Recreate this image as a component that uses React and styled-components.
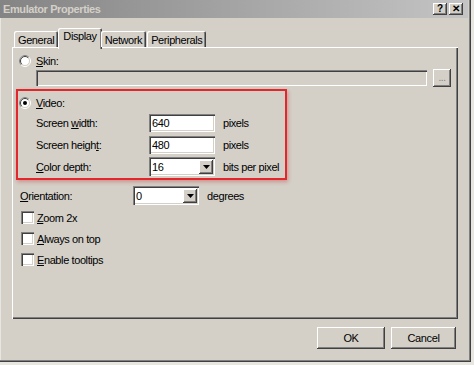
import React from "react";
import styled, { createGlobalStyle } from "styled-components";

const Global = createGlobalStyle`
  html, body { margin: 0; padding: 0; background: #e8e6e1; }
  body { font-family: "Liberation Sans", Arial, sans-serif; font-size: 11px; color: #000; }
  * { box-sizing: border-box; }
`;

const Window = styled.div`
  width: 471px;
  height: 362px;
  background: #d4d0c8;
  display: flex;
  flex-direction: column;
  padding-right: 3px;
  box-shadow: inset -1px -1px #404040, inset -2px -2px #808080, inset 1px 0 #e8e6e1;
  letter-spacing: -0.4px;
`;

const TitleBar = styled.div`
  height: 18px;
  flex: none;
  display: flex;
  align-items: center;
  padding: 0 3px 0 3px;
  background: linear-gradient(to right, #848484, #c4c4c4);
  color: #d4d0c8;
  font-weight: bold;
  font-size: 11px;
`;

const TitleText = styled.div`
  flex: 1;
`;

const TitleButtons = styled.div`
  display: flex;
  gap: 2px;
  margin-right: 2px;
`;

const CaptionButton = styled.div`
  width: 14px;
  height: 12px;
  background: #d4d0c8;
  box-shadow: inset -1px -1px #404040, inset 1px 1px #fff, inset -2px -2px #808080;
  display: flex;
  align-items: center;
  justify-content: center;
  color: #000;
  font-size: 10px;
  font-weight: bold;
  letter-spacing: 0;
  line-height: 1;
`;

const Body = styled.div`
  flex: 1;
  display: flex;
  flex-direction: column;
  padding: 10px 12px 0 12px;
`;

const TabStrip = styled.div`
  display: flex;
  align-items: flex-end;
  height: 19px;
  padding-left: 2px;
  position: relative;
  z-index: 1;
`;

const Tab = styled.div`
  height: ${(p) => (p.$active ? "21px" : "16px")};
  margin: ${(p) => (p.$active ? "0 -1px -2px -1px" : "0 1px 0 0")};
  padding: ${(p) => (p.$active ? "2px 5px 0 5px" : "1px 4px 0 4px")};
  background: #d4d0c8;
  border-top-left-radius: 2px;
  border-top-right-radius: 2px;
  box-shadow: inset 1px 1px #fff, inset -1px 0 #404040, inset -2px 0 #808080;
  display: flex;
  align-items: ${(p) => (p.$active ? "flex-start" : "center")};
  white-space: nowrap;
`;

const Panel = styled.div`
  width: 446px;
  height: 272px;
  background: #d4d0c8;
  box-shadow: inset 1px 1px #fff, inset -1px -1px #404040, inset -2px -2px #808080;
  display: flex;
  flex-direction: column;
  padding: 7px 0 0 4px;
`;

const Row = styled.div`
  display: flex;
  align-items: center;
  height: ${(p) => p.$h || 14}px;
  margin-top: ${(p) => p.$mt || 0}px;
  padding-left: ${(p) => p.$pl || 0}px;
`;

const Label = styled.span`
  width: ${(p) => (p.$w ? `${p.$w}px` : "auto")};
  flex: none;
  white-space: nowrap;
`;

const Unit = styled.span`
  margin-left: 8px;
  white-space: nowrap;
`;

const RadioLabel = styled.span`
  margin-left: 5px;
`;

const TextBox = styled.div`
  width: ${(p) => p.$w}px;
  height: ${(p) => p.$h || 18}px;
  background: ${(p) => (p.$disabled ? "#d4d0c8" : "#fff")};
  box-shadow: inset 1px 1px #808080, inset 2px 2px #404040, inset -1px -1px #fff, inset -2px -2px #d4d0c8;
  padding: 0 3px;
  display: flex;
  align-items: center;
  flex: none;
`;

const Combo = styled(TextBox)`
  padding: 2px 2px 2px 3px;
  justify-content: space-between;
`;

const ComboArrow = styled.div`
  width: 14px;
  height: 14px;
  background: #d4d0c8;
  box-shadow: inset -1px -1px #404040, inset 1px 1px #fff, inset -2px -2px #808080;
  display: flex;
  align-items: center;
  justify-content: center;
`;

const SmallButton = styled.div`
  width: 18px;
  height: 18px;
  margin-left: 6px;
  background: #d4d0c8;
  box-shadow: inset -1px -1px #404040, inset 1px 1px #fff, inset -2px -2px #808080;
  color: #808080;
  display: flex;
  align-items: center;
  justify-content: center;
  font-size: 10px;
  padding-bottom: 2px;
`;

const Highlight = styled.div`
  width: 271px;
  height: 91px;
  margin: 2px 0 0 0;
  border: 2px solid #e3262b;
  box-shadow: 1px 2px 4px rgba(190, 70, 70, 0.45);
  padding: 5px 0 0 1px;
  display: flex;
  flex-direction: column;
`;

const Fields = styled.div`
  display: flex;
  flex-direction: column;
  gap: 3px;
  margin-top: 3px;
`;

const CheckList = styled.div`
  display: flex;
  flex-direction: column;
  gap: 8px;
  margin-top: 6px;
  padding-left: 5px;
`;

const Footer = styled.div`
  display: flex;
  justify-content: flex-end;
  gap: 6px;
  margin-top: 8px;
`;

const PushButton = styled.div`
  width: ${(p) => p.$w}px;
  height: 22px;
  background: #d4d0c8;
  box-shadow: inset -1px -1px #404040, inset 1px 1px #fff, inset -2px -2px #808080;
  display: flex;
  align-items: center;
  justify-content: center;
`;

const CheckBoxBox = styled.div`
  width: 13px;
  height: 13px;
  background: #fff;
  box-shadow: inset 1px 1px #808080, inset 2px 2px #404040, inset -1px -1px #fff, inset -2px -2px #d4d0c8;
  flex: none;
`;

const CheckLabel = styled.span`
  margin-left: 3px;
`;

function Radio({ checked }) {
  return (
    <svg width="12" height="12" viewBox="0 0 12 12" style={{ flex: "none" }}>
      <circle cx="6" cy="6" r="5.5" fill="none" stroke="#fff" />
      <path d="M9.9 2.1 A5.5 5.5 0 0 0 2.1 9.9" fill="none" stroke="#808080" />
      <circle cx="6" cy="6" r="4.5" fill="#fff" />
      <path d="M9.2 2.8 A4.5 4.5 0 0 0 2.8 9.2" fill="none" stroke="#404040" />
      <path d="M9.2 2.8 A4.5 4.5 0 0 1 2.8 9.2" fill="none" stroke="#d4d0c8" />
      {checked && <circle cx="6" cy="6" r="2" fill="#000" />}
    </svg>
  );
}

function Arrow() {
  return (
    <svg width="7" height="4" viewBox="0 0 7 4">
      <path d="M0 0h7L3.5 4z" fill="#000" />
    </svg>
  );
}

export default function App() {
  return (
    <>
      <Global />
      <Window>
        <TitleBar>
          <TitleText>Emulator Properties</TitleText>
          <TitleButtons>
            <CaptionButton>?</CaptionButton>
            <CaptionButton>✕</CaptionButton>
          </TitleButtons>
        </TitleBar>
        <Body>
          <TabStrip>
            <Tab>General</Tab>
            <Tab $active>Display</Tab>
            <Tab>Network</Tab>
            <Tab>Peripherals</Tab>
          </TabStrip>
          <Panel>
            <Row $pl={3}>
              <Radio />
              <RadioLabel>
                <u>S</u>kin:
              </RadioLabel>
            </Row>
            <Row $h={18} $mt={1} $pl={20}>
              <TextBox $w={391} $h={16} $disabled />
              <SmallButton>...</SmallButton>
            </Row>
            <Highlight>
              <Row>
                <Radio checked />
                <RadioLabel>
                  <u>V</u>ideo:
                </RadioLabel>
              </Row>
              <Fields>
                <Row $h={19} $pl={17}>
                  <Label $w={113}>
                    Screen <u>w</u>idth:
                  </Label>
                  <TextBox $w={66}>640</TextBox>
                  <Unit>pixels</Unit>
                </Row>
                <Row $h={19} $pl={17}>
                  <Label $w={113}>
                    Screen heigh<u>t</u>:
                  </Label>
                  <TextBox $w={66}>480</TextBox>
                  <Unit>pixels</Unit>
                </Row>
                <Row $h={19} $pl={17}>
                  <Label $w={113}>
                    <u>C</u>olor depth:
                  </Label>
                  <Combo $w={66} $h={19}>
                    16
                    <ComboArrow>
                      <Arrow />
                    </ComboArrow>
                  </Combo>
                  <Unit>bits per pixel</Unit>
                </Row>
              </Fields>
            </Highlight>
            <Row $h={19} $mt={6} $pl={4}>
              <Label $w={113}>
                <u>O</u>rientation:
              </Label>
              <Combo $w={66} $h={19}>
                0
                <ComboArrow>
                  <Arrow />
                </ComboArrow>
              </Combo>
              <Unit>degrees</Unit>
            </Row>
            <CheckList>
              <Row $h={13}>
                <CheckBoxBox />
                <CheckLabel>
                  <u>Z</u>oom 2x
                </CheckLabel>
              </Row>
              <Row $h={13}>
                <CheckBoxBox />
                <CheckLabel>
                  <u>A</u>lways on top
                </CheckLabel>
              </Row>
              <Row $h={13}>
                <CheckBoxBox />
                <CheckLabel>
                  <u>E</u>nable tooltips
                </CheckLabel>
              </Row>
            </CheckList>
          </Panel>
          <Footer>
            <PushButton $w={68}>OK</PushButton>
            <PushButton $w={65}>Cancel</PushButton>
          </Footer>
        </Body>
      </Window>
    </>
  );
}
